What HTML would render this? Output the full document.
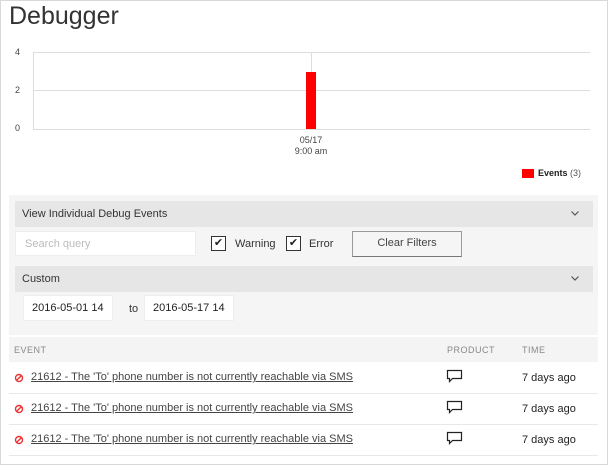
<!DOCTYPE html>
<html><head><style>
*{margin:0;padding:0;box-sizing:border-box}
body{width:608px;height:465px;background:#fff;font-family:"Liberation Sans",sans-serif;color:#222;position:relative;overflow:hidden}
.a{position:absolute}
.t{font-size:11px}
</style></head><body>
<div class="a" style="left:0;top:0;width:608px;height:465px;border:1px solid #d8d8d8"></div>
<div class="a" style="left:9px;top:2px;font-size:25px;color:#333">Debugger</div>
<div class="a" style="left:15px;top:47px;font-size:9px;color:#444">4</div>
<div class="a" style="left:15px;top:85px;font-size:9px;color:#444">2</div>
<div class="a" style="left:15px;top:123px;font-size:9px;color:#444">0</div>
<div class="a" style="left:33px;top:52px;width:557px;height:1px;background:#ddd"></div>
<div class="a" style="left:33px;top:90px;width:557px;height:1px;background:#ddd"></div>
<div class="a" style="left:33px;top:129px;width:557px;height:1px;background:#ddd"></div>
<div class="a" style="left:33px;top:52px;width:1px;height:77px;background:#ddd"></div>
<div class="a" style="left:311px;top:52px;width:1px;height:77px;background:#ddd"></div>
<div class="a" style="left:306px;top:72px;width:10px;height:57px;background:#f00"></div>
<div class="a" style="left:281px;top:135px;width:60px;text-align:center;font-size:9px;line-height:11px;color:#444">05/17<br>9:00 am</div>
<div class="a" style="left:522px;top:169px;width:12px;height:9px;background:#f00"></div>
<div class="a" style="left:538px;top:168px;font-size:9px;color:#222"><b>Events</b> <span style="color:#555">(3)</span></div>
<div class="a" style="left:9px;top:195px;width:589px;height:140px;background:#f5f5f5"></div>
<div class="a" style="left:15px;top:201px;width:578px;height:26px;background:#e6e6e6"></div>
<div class="a t" style="left:22px;top:208px;color:#333">View Individual Debug Events</div>
<svg class="a" style="left:570px;top:210px" width="10" height="7"><path d="M1.5 1.5l3.5 3.5 3.5-3.5" fill="none" stroke="#555" stroke-width="1.2"/></svg>
<div class="a" style="left:15px;top:231px;width:181px;height:25px;background:#fff;border:1px solid #eee"></div>
<div class="a t" style="left:25px;top:238px;color:#bbb">Search query</div>
<div class="a" style="left:211px;top:236px;width:15px;height:15px;border:1px solid #333;background:#fff;font-size:11px;line-height:13px;text-align:center">✔</div>
<div class="a t" style="left:235px;top:238px;color:#333">Warning</div>
<div class="a" style="left:286px;top:236px;width:15px;height:15px;border:1px solid #333;background:#fff;font-size:11px;line-height:13px;text-align:center">✔</div>
<div class="a t" style="left:309px;top:238px;color:#333">Error</div>
<div class="a t" style="left:352px;top:231px;width:110px;height:26px;border:1px solid #999;border-bottom-color:#777;background:#f5f5f5;text-align:center;line-height:22px;color:#444">Clear Filters</div>
<div class="a" style="left:15px;top:266px;width:578px;height:26px;background:#e6e6e6"></div>
<div class="a t" style="left:22px;top:273px;color:#333">Custom</div>
<svg class="a" style="left:570px;top:275px" width="10" height="7"><path d="M1.5 1.5l3.5 3.5 3.5-3.5" fill="none" stroke="#555" stroke-width="1.2"/></svg>
<div class="a t" style="left:23px;top:295px;width:90px;height:26px;background:#fff;border:1px solid #eee;line-height:24px;padding-left:8px;color:#222">2016-05-01 14</div>
<div class="a t" style="left:129px;top:303px;color:#333">to</div>
<div class="a t" style="left:144px;top:295px;width:90px;height:26px;background:#fff;border:1px solid #eee;line-height:24px;padding-left:8px;color:#222">2016-05-17 14</div>
<div class="a" style="left:9px;top:337px;width:589px;height:25px;background:#f4f4f4"></div>
<div class="a" style="left:14px;top:345px;font-size:9px;color:#888;letter-spacing:.5px">EVENT</div>
<div class="a" style="left:447px;top:345px;font-size:9px;color:#888;letter-spacing:.5px">PRODUCT</div>
<div class="a" style="left:522px;top:345px;font-size:9px;color:#888;letter-spacing:.5px">TIME</div>
<div class="a" style="left:9px;top:393px;width:589px;height:1px;background:#e8e8e8"></div>
<div class="a" style="left:9px;top:424px;width:589px;height:1px;background:#e8e8e8"></div>
<div class="a" style="left:9px;top:455px;width:589px;height:1px;background:#e8e8e8"></div>
<div class="a" style="left:0;top:363px;width:608px">
 <div class="a" style="top:8px;left:0;width:608px">
  <svg class="a" style="left:14px;top:2px" width="10" height="10"><circle cx="5" cy="5" r="3.5" fill="none" stroke="#e33" stroke-width="1.4"/><line x1="2.7" y1="7.3" x2="7.3" y2="2.7" stroke="#e33" stroke-width="1.4"/></svg>
  <span class="a t" style="left:31px;top:0;color:#444;text-decoration:underline;white-space:nowrap">21612 - The 'To' phone number is not currently reachable via SMS</span>
  <svg class="a" style="left:446px;top:-2px" width="18" height="14"><path d="M1.5 1.5h14v8h-9l-3 3v-3h-2z" fill="none" stroke="#222" stroke-width="1.2"/></svg>
  <span class="a t" style="left:522px;top:1px;color:#222;white-space:nowrap">7 days ago</span>
 </div>
 <div class="a" style="top:39px;left:0;width:608px">
  <svg class="a" style="left:14px;top:2px" width="10" height="10"><circle cx="5" cy="5" r="3.5" fill="none" stroke="#e33" stroke-width="1.4"/><line x1="2.7" y1="7.3" x2="7.3" y2="2.7" stroke="#e33" stroke-width="1.4"/></svg>
  <span class="a t" style="left:31px;top:0;color:#444;text-decoration:underline;white-space:nowrap">21612 - The 'To' phone number is not currently reachable via SMS</span>
  <svg class="a" style="left:446px;top:-2px" width="18" height="14"><path d="M1.5 1.5h14v8h-9l-3 3v-3h-2z" fill="none" stroke="#222" stroke-width="1.2"/></svg>
  <span class="a t" style="left:522px;top:1px;color:#222;white-space:nowrap">7 days ago</span>
 </div>
 <div class="a" style="top:70px;left:0;width:608px">
  <svg class="a" style="left:14px;top:2px" width="10" height="10"><circle cx="5" cy="5" r="3.5" fill="none" stroke="#e33" stroke-width="1.4"/><line x1="2.7" y1="7.3" x2="7.3" y2="2.7" stroke="#e33" stroke-width="1.4"/></svg>
  <span class="a t" style="left:31px;top:0;color:#444;text-decoration:underline;white-space:nowrap">21612 - The 'To' phone number is not currently reachable via SMS</span>
  <svg class="a" style="left:446px;top:-2px" width="18" height="14"><path d="M1.5 1.5h14v8h-9l-3 3v-3h-2z" fill="none" stroke="#222" stroke-width="1.2"/></svg>
  <span class="a t" style="left:522px;top:1px;color:#222;white-space:nowrap">7 days ago</span>
 </div>
</div>
</body></html>
